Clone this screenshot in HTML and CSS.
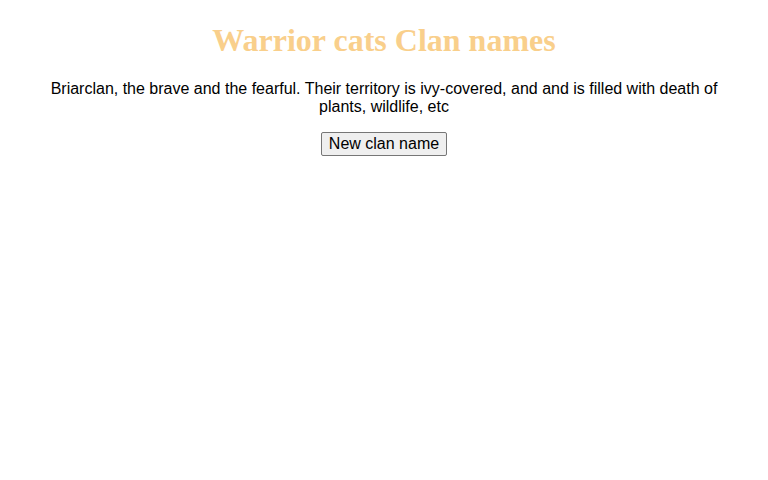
FILE: index.html
```html
<!DOCTYPE html>
<html lang="en">
<head>
    <meta charset="UTF-8">
    <meta name="viewport" content="width=device-width, initial-scale=1.0">
    <title>Warrior cats Clan names</title>
    <link rel="stylesheet" href="styles.css">
</head>
<body>
    <h1 class="title">Warrior cats Clan names</h1>

    <!-- Generated clan description -->
    <p id="clan-text" class="clan-text">Briarclan, the brave and the fearful. Their territory is ivy-covered, and and is filled with death of plants, wildlife, etc</p>

    <button id="new-clan-btn" class="btn">New clan name</button>
</body>
</html>
```

FILE: styles.css
```css
body {
    margin: 8px;
    text-align: center;
    font-family: "Liberation Sans", Arial, sans-serif;
    font-size: 16px;
    color: #000;
    background-color: #fff;
}

.title {
    font-family: "Liberation Serif", "Times New Roman", serif;
    font-size: 32px;
    font-weight: bold;
    color: #f9cf8b;
    margin: 14px 0 21px;
}

.clan-text {
    max-width: 690px;
    margin: 16px auto;
}

.btn {
    font-family: "Liberation Sans", Arial, sans-serif;
    font-size: 16px;
    padding: 2px 7px;
    color: #000;
    background-color: #efefef;
    border: 1px solid #767676;
    border-radius: 2px;
}
```
